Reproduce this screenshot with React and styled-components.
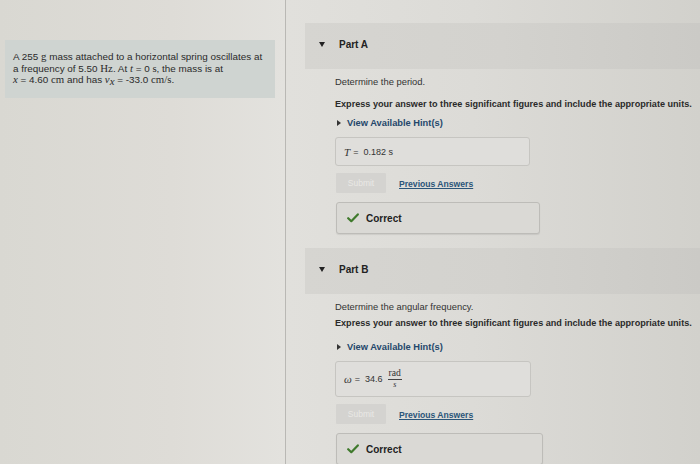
import React from 'react'
import styled, { createGlobalStyle } from 'styled-components'

const Global = createGlobalStyle`
  html, body { margin: 0; padding: 0; }
  body {
    width: 700px;
    height: 464px;
    overflow: hidden;
    font-family: "Liberation Sans", Arial, sans-serif;
    color: #2b2b2b;
  }
`

const Page = styled.div`
  display: flex;
  width: 700px;
  height: 464px;
  overflow: hidden;
`

const LeftPanel = styled.div`
  width: 286px;
  flex-shrink: 0;
  padding: 40px 10px 0 5px;
  box-sizing: border-box;
  background: linear-gradient(90deg, #d9d8d2 0%, #dedcd7 60%, #e3e2de 100%);
  border-right: 1px solid #b9b8b4;
`

const ProblemBox = styled.div`
  background: #cfd4d1;
  padding: 11px 4px 12px 8px;
  font-size: 9.9px;
  line-height: 10.5px;
  color: #2a2a2a;
  white-space: nowrap;
`

const M = styled.span`
  font-family: "Liberation Serif", "Times New Roman", serif;
  font-style: ${p => (p.$upright ? 'normal' : 'italic')};
  font-size: 10.8px;
  line-height: 10px;
`

const Sub = styled.sub`
  font-size: 6.5px;
  line-height: 0;
  vertical-align: -2px;
`

const RightPanel = styled.div`
  flex: 1;
  padding: 23px 0 0 19px;
  background: linear-gradient(90deg, #e1e0dc 0%, #dcdbd7 45%, #d2d1cc 100%);
`

const PartHeader = styled.div`
  height: 46px;
  display: flex;
  align-items: center;
  gap: 14px;
  padding: 0 0 4px 14px;
  box-sizing: border-box;
  background: linear-gradient(90deg, #d6d5d1 0%, #d3d2ce 50%, #cbcac6 100%);
  margin-top: ${p => p.$top || 0}px;
  font-weight: bold;
  font-size: 10px;
  color: #222;
`

const Caret = styled.span`
  width: 0;
  height: 0;
  border-left: 3.5px solid transparent;
  border-right: 3.5px solid transparent;
  border-top: 5px solid #222;
`

const Content = styled.div`
  padding: 6px 0 0 30px;
  display: flex;
  flex-direction: column;
  align-items: flex-start;
`

const Prompt = styled.div`
  font-size: 9.4px;
  line-height: 14px;
  color: #333;
`

const Instruction = styled.div`
  margin-top: ${p => p.$gap}px;
  font-size: 9.1px;
  line-height: 14px;
  font-weight: bold;
  color: #2a2a2a;
  white-space: nowrap;
`

const Hint = styled.div`
  margin-top: ${p => p.$gap}px;
  display: flex;
  align-items: center;
  gap: 6px;
  font-size: 9.3px;
  line-height: 14px;
  font-weight: bold;
  color: #24476b;
  padding-left: 2px;
`

const HintArrow = styled.span`
  width: 0;
  height: 0;
  border-top: 3.5px solid transparent;
  border-bottom: 3.5px solid transparent;
  border-left: 4.5px solid #333;
`

const AnswerBox = styled.div`
  margin-top: 7px;
  width: ${p => p.$w}px;
  height: ${p => p.$h}px;
  box-sizing: border-box;
  border: 1px solid #c6c5c1;
  border-radius: 3px;
  background: #dfdedb;
  display: flex;
  align-items: center;
  padding-left: 8px;
  font-size: 9px;
  color: #333;
`

const Var = styled.span`
  font-family: "Liberation Serif", "Times New Roman", serif;
  font-style: italic;
  font-size: 11px;
  margin-right: 3px;
`

const Frac = styled.span`
  display: inline-flex;
  flex-direction: column;
  align-items: center;
  margin-left: 5px;
  font-family: "Liberation Serif", "Times New Roman", serif;
  font-size: 9.6px;
  line-height: 10px;
`

const Num = styled.span`
  padding: 0 1px 1px;
  border-bottom: 0.8px solid #444;
`

const Den = styled.span`
  font-style: italic;
  font-size: 8px;
`

const ActionRow = styled.div`
  margin-top: 7px;
  display: flex;
  align-items: center;
  gap: 13px;
  margin-left: 1px;
`

const SubmitButton = styled.div`
  width: 50px;
  height: 20px;
  background: #d4d3d0;
  color: #e9e8e5;
  font-size: 8.5px;
  display: flex;
  align-items: center;
  justify-content: center;
  border-radius: 1px;
`

const PrevLink = styled.span`
  font-size: 8.6px;
  font-weight: bold;
  color: #2b5579;
  text-decoration: underline;
  padding-top: 1px;
`

const CorrectBox = styled.div`
  margin-top: 9px;
  margin-left: 1px;
  width: ${p => p.$w}px;
  height: 32px;
  flex-shrink: 0;
  box-sizing: border-box;
  border: 1px solid #bdbcb8;
  border-radius: 3px;
  background: #dad9d5;
  box-shadow: 0 1px 1px rgba(0, 0, 0, 0.08);
  display: flex;
  align-items: center;
  gap: 7px;
  padding-left: 10px;
  font-size: 10px;
  font-weight: bold;
  color: #222;
`

const Check = () => (
  <svg width="12" height="10" viewBox="0 0 12 10">
    <path d="M1.2 5.2 L4.3 8.2 L10.8 1.4" fill="none" stroke="#3f7a2c" strokeWidth="2.2" strokeLinecap="round" strokeLinejoin="round" />
  </svg>
)

const Part = ({ title, top, prompt, box, boxW, boxH, correctW, gaps }) => (
  <>
    <PartHeader $top={top}>
      <Caret />
      {title}
    </PartHeader>
    <Content>
      <Prompt>{prompt}</Prompt>
      <Instruction $gap={gaps[0]}>Express your answer to three significant figures and include the appropriate units.</Instruction>
      <Hint $gap={gaps[1]}>
        <HintArrow />
        View Available Hint(s)
      </Hint>
      <AnswerBox $w={boxW} $h={boxH}>{box}</AnswerBox>
      <ActionRow>
        <SubmitButton>Submit</SubmitButton>
        <PrevLink>Previous Answers</PrevLink>
      </ActionRow>
      <CorrectBox $w={correctW}>
        <Check />
        Correct
      </CorrectBox>
    </Content>
  </>
)

export default function App() {
  return (
    <Page>
      <Global />
      <LeftPanel>
        <ProblemBox>
          A 255 <M $upright>g</M> mass attached to a horizontal spring oscillates at<br />
          a frequency of 5.50 <M $upright>Hz</M>. At <M>t</M> = 0 <M $upright>s</M>, the mass is at<br />
          <M>x</M> = 4.60 <M $upright>cm</M> and has <M>v</M><Sub><M>x</M></Sub> = -33.0 <M $upright>cm/s</M>.
        </ProblemBox>
      </LeftPanel>
      <RightPanel>
        <Part
          title="Part A"
          top={0}
          prompt="Determine the period."
          boxW={195}
          boxH={29}
          correctW={204}
          gaps={[8, 5]}
          box={<><Var>T</Var> = &nbsp;0.182 s</>}
        />
        <Part
          title="Part B"
          top={14}
          prompt="Determine the angular frequency."
          boxW={196}
          boxH={36}
          correctW={207}
          gaps={[2, 10]}
          box={<><Var>ω</Var> = &nbsp;34.6 <Frac><Num>rad</Num><Den>s</Den></Frac></>}
        />
      </RightPanel>
    </Page>
  )
}
